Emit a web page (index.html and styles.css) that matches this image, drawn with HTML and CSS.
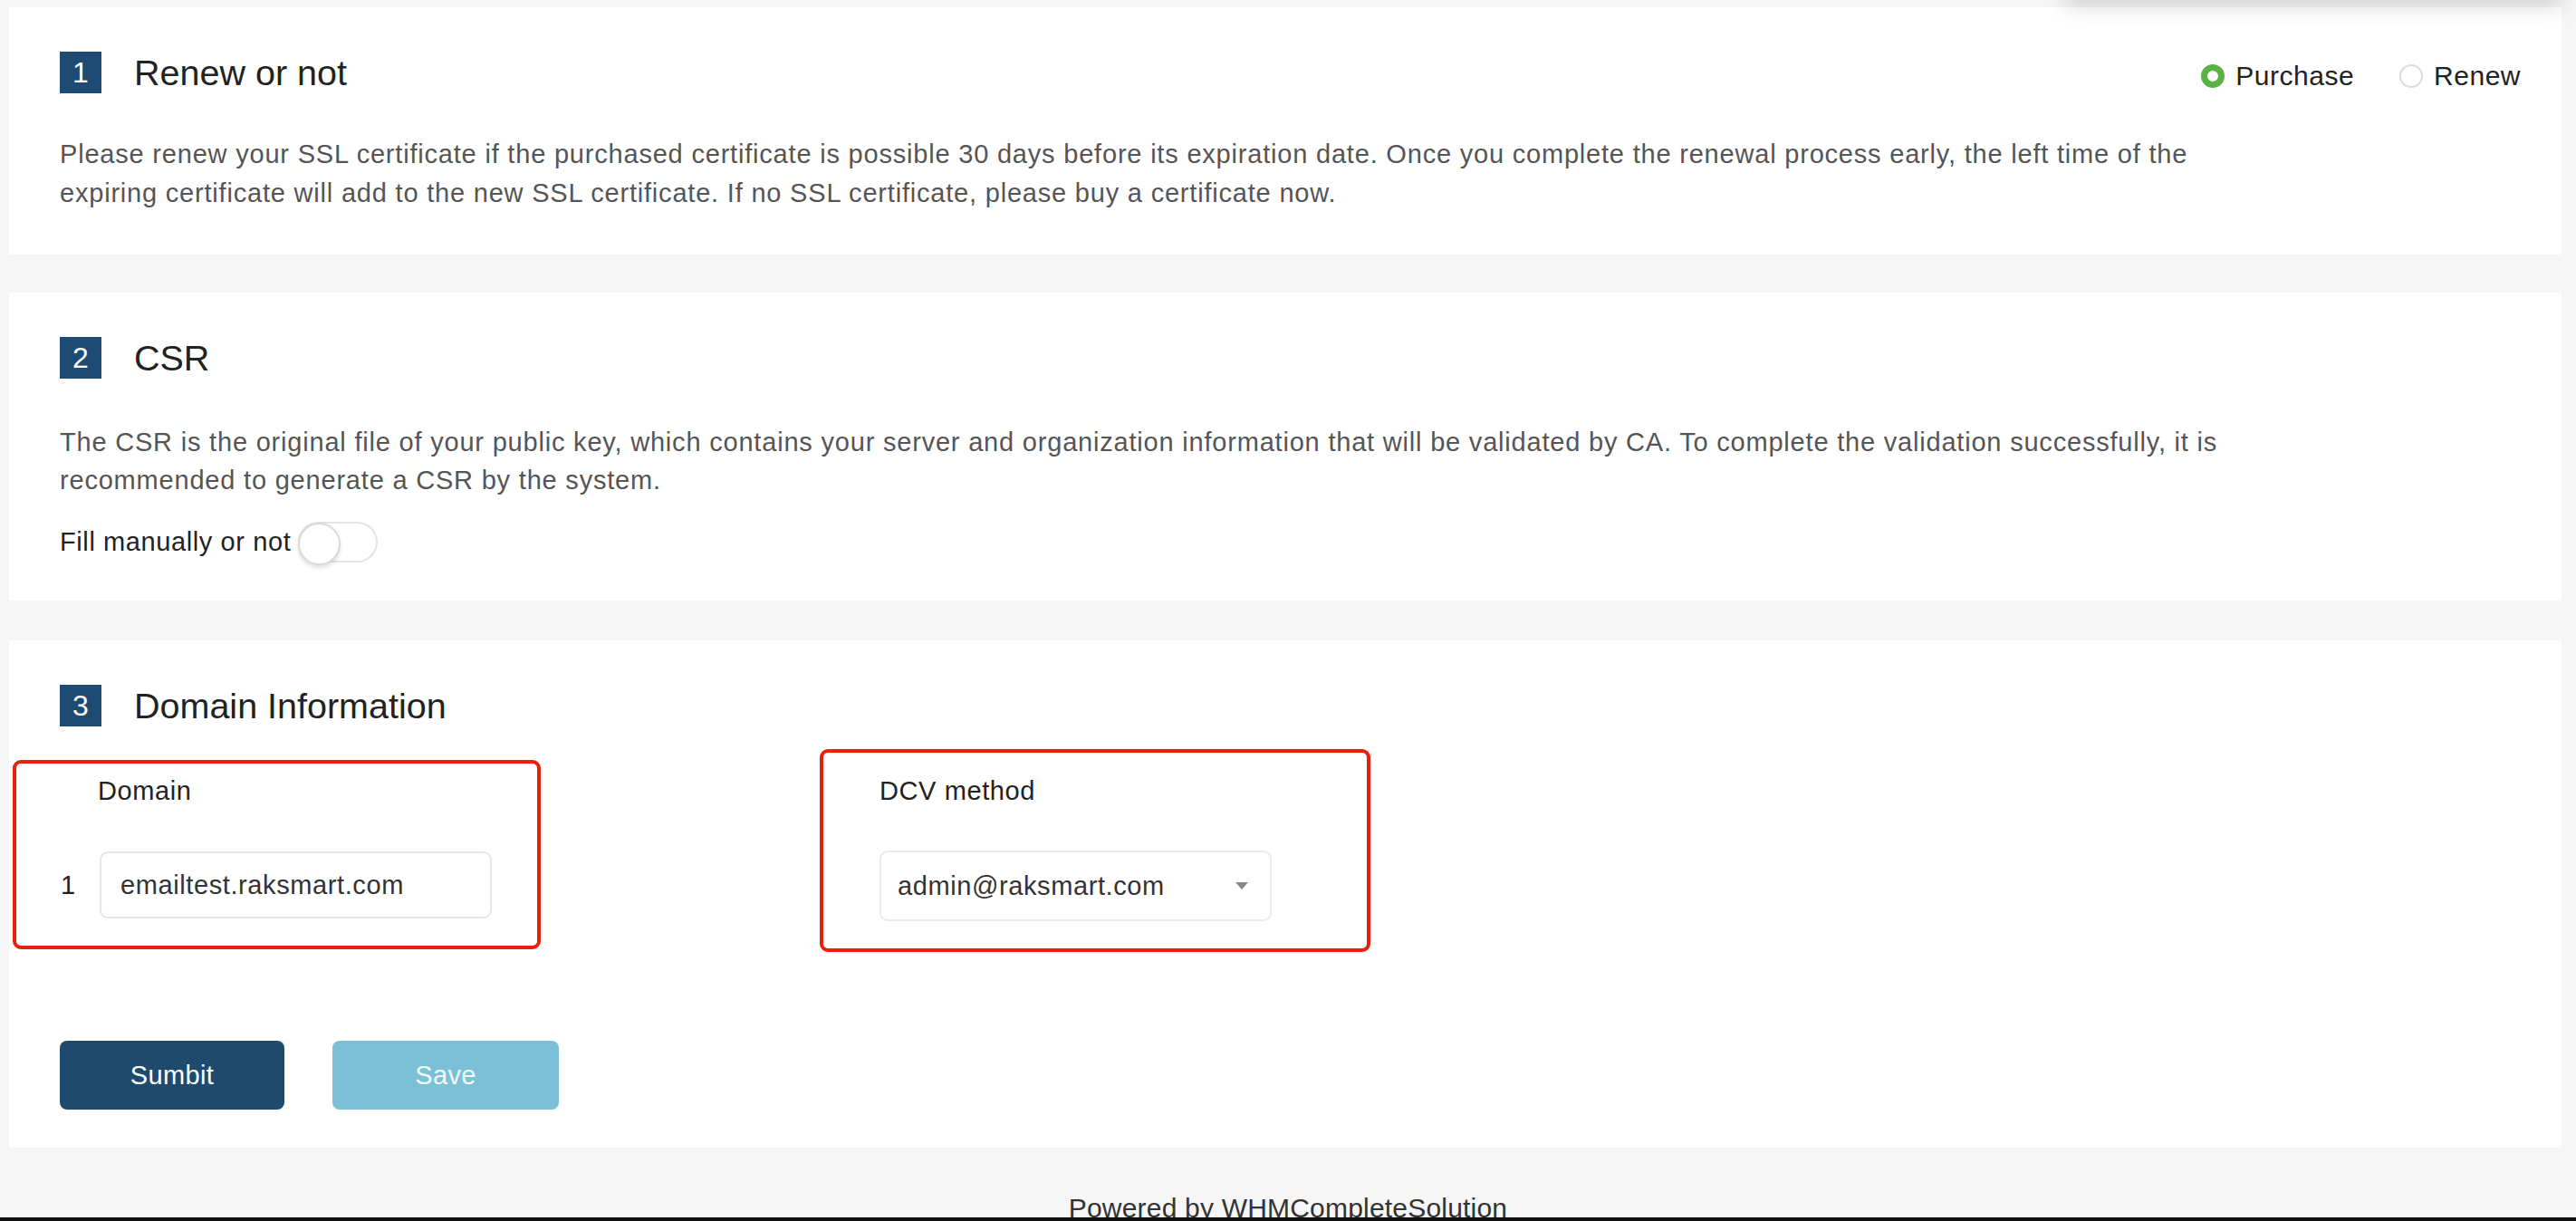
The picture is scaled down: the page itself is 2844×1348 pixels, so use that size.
FILE: index.html
```html
<!DOCTYPE html>
<html lang="en">
<head>
<meta charset="utf-8">
<title>SSL Certificate</title>
<link rel="stylesheet" href="styles.css">
</head>
<body>
<div class="top-shadow"></div>
<main class="page">
  <section class="card card-renew">
    <div class="card-head">
      <div class="title">
        <span class="badge">1</span>
        <h2>Renew or not</h2>
      </div>
      <div class="radios">
        <label class="radio"><span class="dot dot-on"></span>Purchase</label>
        <label class="radio"><span class="dot"></span>Renew</label>
      </div>
    </div>
    <p class="desc">Please renew your SSL certificate if the purchased certificate is possible 30 days before its expiration date. Once you complete the renewal process early, the left time of the<br>expiring certificate will add to the new SSL certificate. If no SSL certificate, please buy a certificate now.</p>
  </section>

  <section class="card card-csr">
    <div class="card-head">
      <div class="title">
        <span class="badge">2</span>
        <h2>CSR</h2>
      </div>
    </div>
    <p class="desc">The CSR is the original file of your public key, which contains your server and organization information that will be validated by CA. To complete the validation successfully, it is<br>recommended to generate a CSR by the system.</p>
    <div class="switch-row">
      <span class="switch-label">Fill manually or not</span>
      <span class="switch"><span class="knob"></span></span>
    </div>
  </section>

  <section class="card card-domain">
    <div class="card-head">
      <div class="title">
        <span class="badge">3</span>
        <h2>Domain Information</h2>
      </div>
    </div>
    <div class="fields">
      <div class="field-box box-domain">
        <div class="field-label">Domain</div>
        <div class="field-row">
          <span class="row-num">1</span>
          <div class="input">emailtest.raksmart.com</div>
        </div>
      </div>
      <div class="field-box box-dcv">
        <div class="field-label">DCV method</div>
        <div class="select">
          <span>admin@raksmart.com</span>
          <span class="caret"></span>
        </div>
      </div>
    </div>
    <div class="actions">
      <button class="btn btn-primary">Sumbit</button>
      <button class="btn btn-light">Save</button>
    </div>
  </section>

  <footer class="footer">Powered by WHMCompleteSolution</footer>
</main>
<div class="bottom-bar"></div>
</body>
</html>
```

FILE: styles.css
```css
* { box-sizing: border-box; }

html, body {
  margin: 0;
  padding: 0;
}

body {
  background: #f6f6f6;
  font-family: "Liberation Sans", Arial, Helvetica, sans-serif;
  color: #222;
  height: 1348px;
  overflow: hidden;
  position: relative;
}

.top-shadow {
  position: absolute;
  top: -50px;
  left: 2280px;
  width: 550px;
  height: 50px;
  background: #fff;
  border-radius: 6px;
  box-shadow: 0 6px 26px rgba(0, 0, 0, 0.16);
  z-index: 2;
}

.page {
  padding: 8px 16px 0 10px;
  display: flex;
  flex-direction: column;
}

.card {
  background: #fff;
  padding: 49px 45px 0 56px;
}

.card-renew { height: 273px; }
.card-csr { height: 340px; margin-top: 42px; }
.card-domain { height: 560px; margin-top: 44px; }

.card-head {
  display: flex;
  align-items: center;
  justify-content: space-between;
  height: 46px;
}

.title {
  display: flex;
  align-items: center;
  gap: 36px;
}

.badge {
  width: 46px;
  height: 46px;
  background: #1e4b74;
  color: #fff;
  font-size: 32px;
  line-height: 46px;
  text-align: center;
}

.title h2 {
  margin: 0;
  font-size: 39.5px;
  font-weight: normal;
  color: #222;
  line-height: 46px;
}

.radios {
  display: flex;
  align-items: center;
  gap: 50px;
  margin-top: 8px;
}

.radio {
  display: flex;
  align-items: center;
  gap: 12px;
  font-size: 30px;
  letter-spacing: 0.5px;
  color: #222;
}

.dot {
  width: 26px;
  height: 26px;
  border-radius: 50%;
  border: 2px solid #dcdcdc;
  background: #fff;
}

.dot-on {
  border: 7px solid #5ab243;
}

.desc {
  margin: 46px 0 0;
  font-size: 29px;
  letter-spacing: 0.8px;
  line-height: 43px;
  color: #555;
  white-space: nowrap;
}

.card-csr .desc { margin-top: 49px; line-height: 42px; }

.switch-row {
  display: flex;
  align-items: center;
  gap: 8px;
  margin-top: 23px;
  height: 48px;
}

.switch-label {
  font-size: 29px;
  letter-spacing: 0.6px;
  color: #222;
}

.switch {
  position: relative;
  width: 88px;
  height: 45px;
  border: 2px solid #e4e4e4;
  border-radius: 23px;
  background: #fff;
}

.knob {
  position: absolute;
  left: -2px;
  top: -1px;
  width: 47px;
  height: 47px;
  border-radius: 50%;
  background: #fff;
  border: 2px solid #dadada;
  box-shadow: 0 3px 4px rgba(0, 0, 0, 0.12);
}

.fields {
  display: flex;
  align-items: flex-start;
  gap: 308px;
  margin-left: -52px;
  margin-top: 25px;
}

.field-box {
  border: 4px solid #e8200f;
  border-radius: 9px;
}

.box-domain {
  width: 583px;
  height: 209px;
  margin-top: 12px;
  padding: 13px 50px 0 49px;
}

.box-dcv {
  width: 608px;
  height: 224px;
  padding: 25px 0 0 62px;
}

.field-label {
  font-size: 29px;
  letter-spacing: 0.6px;
  line-height: 34px;
  color: #222;
}

.box-domain .field-label { padding-left: 41px; }

.field-row {
  display: flex;
  align-items: center;
  margin-top: 50px;
}

.row-num {
  width: 43px;
  font-size: 29px;
  color: #222;
}

.input {
  width: 433px;
  height: 74px;
  border: 2px solid #e6e6e6;
  border-radius: 9px;
  padding-left: 21px;
  display: flex;
  align-items: center;
  font-size: 29px;
  letter-spacing: 0.6px;
  color: #333;
}

.select {
  margin-top: 49px;
  width: 433px;
  height: 78px;
  border: 2px solid #ebebeb;
  border-radius: 9px;
  padding: 0 24px 0 18px;
  display: flex;
  align-items: center;
  justify-content: space-between;
  font-size: 29px;
  letter-spacing: 0.6px;
  color: #333;
}

.caret {
  width: 0;
  height: 0;
  border-left: 7px solid transparent;
  border-right: 7px solid transparent;
  border-top: 8px solid #888;
}

.actions {
  display: flex;
  gap: 53px;
  margin-top: 98px;
}

.btn {
  height: 76px;
  border: none;
  border-radius: 8px;
  font-family: inherit;
  font-size: 29px;
  letter-spacing: 0.4px;
  color: #fff;
}

.btn-primary { width: 248px; background: #1e4a6e; }
.btn-light { width: 250px; background: #7bc0d7; color: #f4fbfd; }

.footer {
  margin-top: 49px;
  margin-right: -16px;
  margin-left: -10px;
  text-align: center;
  font-size: 30px;
  letter-spacing: 0.2px;
  line-height: 36px;
  color: #333;
}

.bottom-bar {
  position: absolute;
  left: 0;
  right: 0;
  bottom: 0;
  height: 4px;
  background: #111;
}
```
